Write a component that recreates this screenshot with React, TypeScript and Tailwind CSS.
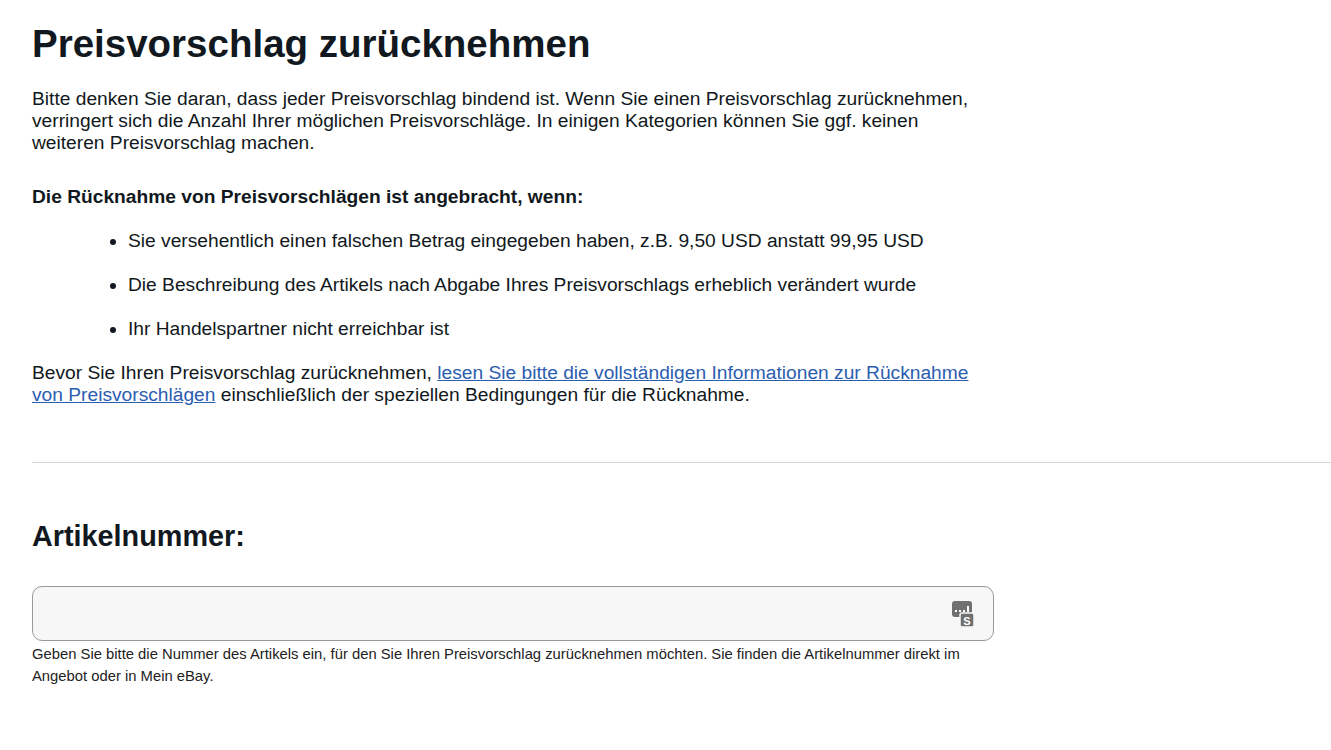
import React from 'react'

const ItemIcon = () => (
  <svg width="24" height="28" viewBox="0 0 24 28">
    <rect x="1" y="1" width="20" height="16" rx="3" fill="#707070" />
    <rect x="4" y="10" width="2" height="2" fill="#fff" />
    <rect x="8" y="10" width="2" height="2" fill="#fff" />
    <rect x="12" y="10" width="2" height="2" fill="#fff" />
    <rect x="16" y="6" width="2" height="6" fill="#fff" />
    <rect x="9" y="13" width="14" height="14" rx="2" fill="#707070" stroke="#f7f7f7" strokeWidth="1.5" />
    <text x="16" y="24.5" textAnchor="middle" fontSize="11" fontWeight="bold" fill="#fff" fontFamily="Liberation Sans, Arial, sans-serif">S</text>
  </svg>
)

const App = () => {
  return (
    <div className="min-h-[750px] bg-white text-[#111820]" style={{ fontFamily: '"Liberation Sans", Arial, sans-serif' }}>
      <div className="pl-8 pt-[21px]">
        <div className="w-[962px]">
          <h1 className="text-[38.5px] font-bold leading-[46px]">Preisvorschlag zurücknehmen</h1>
          <p className="mt-[21px] text-[19.2px] leading-[22px]">
            Bitte denken Sie daran, dass jeder Preisvorschlag bindend ist. Wenn Sie einen Preisvorschlag zurücknehmen, verringert sich die Anzahl Ihrer möglichen Preisvorschläge. In einigen Kategorien können Sie ggf. keinen weiteren Preisvorschlag machen.
          </p>
          <p className="mt-[32px] text-[19.2px] leading-[22px] font-bold">Die Rücknahme von Preisvorschlägen ist angebracht, wenn:</p>
          <ul className="mt-[22px] list-disc pl-[96px] text-[19.2px] leading-[22px] flex flex-col gap-[22px]">
            <li>Sie versehentlich einen falschen Betrag eingegeben haben, z.B. 9,50 USD anstatt 99,95 USD</li>
            <li>Die Beschreibung des Artikels nach Abgabe Ihres Preisvorschlags erheblich verändert wurde</li>
            <li>Ihr Handelspartner nicht erreichbar ist</li>
          </ul>
          <p className="mt-[22px] text-[19.2px] leading-[22px]">
            Bevor Sie Ihren Preisvorschlag zurücknehmen,{' '}
            <a href="#" className="text-[#2b5db0] underline">
              lesen Sie bitte die vollständigen Informationen zur Rücknahme von Preisvorschlägen
            </a>{' '}
            einschließlich der speziellen Bedingungen für die Rücknahme.
          </p>
        </div>
        <hr className="mt-[56px] border-0 border-t border-[#d6d6d6]" />
        <div className="w-[962px]">
          <h2 className="mt-[56px] text-[28.8px] font-bold leading-[34px]">Artikelnummer:</h2>
          <div className="mt-[33px] h-[55px] rounded-[10px] border border-[#999] bg-[#f7f7f7] flex items-center justify-end pr-[18px]">
            <ItemIcon />
          </div>
          <p className="mt-[2px] text-[14.8px] leading-[22px] text-[#222]">
            Geben Sie bitte die Nummer des Artikels ein, für den Sie Ihren Preisvorschlag zurücknehmen möchten. Sie finden die Artikelnummer direkt im Angebot oder in Mein eBay.
          </p>
        </div>
      </div>
    </div>
  )
}

export default App
